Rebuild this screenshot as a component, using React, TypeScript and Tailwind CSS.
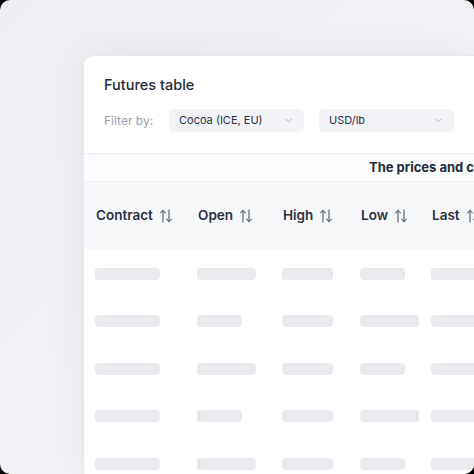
import React from "react";
import { ChevronDown } from "lucide-react";

// skeleton bar widths per row, one per column
const rows: number[][] = [
  [65, 59, 51, 45, 60],
  [65, 45, 51, 59, 60],
  [65, 59, 51, 45, 60],
  [65, 45, 51, 59, 60],
  [65, 59, 51, 45, 60],
];

const columns = ["Contract", "Open", "High", "Low", "Last"];

const SortIcon = () => (
  <svg viewBox="0 0 14 14" className="h-[14px] w-[14px] text-[#6b7280]" fill="none" stroke="currentColor" strokeWidth={1.3} strokeLinecap="round" strokeLinejoin="round">
    <path d="M4 1.5v11.5" />
    <path d="M1.6 3.9 4 1.5l2.4 2.4" />
    <path d="M10 1v11.5" />
    <path d="M7.6 10.1 10 12.5l2.4-2.4" />
  </svg>
);

const Select = ({ label }: { label: string }) => (
  <div className="flex h-[23px] w-[135px] items-center justify-between rounded-[5px] bg-[#f1f3f7] pl-[10px] pr-[10px]">
    <span className="text-[11px] text-[#2d3240]">{label}</span>
    <ChevronDown className="h-[11px] w-[11px] text-[#9aa1ae]" strokeWidth={1.75} />
  </div>
);

const App = () => {
  return (
    <div className="h-[474px] w-[474px] bg-black" style={{ fontFamily: "Inter, 'Noto Sans', sans-serif" }}>
      <div className="h-full w-full overflow-hidden rounded-[10px] bg-gradient-to-br from-[#eceef2] to-[#f4f5f8] pl-[83px] pt-[55px]">
        <div className="h-full overflow-hidden rounded-tl-[10px] border-l border-t border-[#e4e7ec] bg-white shadow-[0_0_40px_rgba(30,40,70,0.06)]">
          <div className="border-b border-[#e8eaee] px-5 pb-[21px] pt-[18px]">
            <div className="text-[14.5px] font-medium leading-[22px] text-[#272b37]">Futures table</div>
            <div className="mt-[13px] flex items-center">
              <span className="w-[65px] text-[12px] text-[#9aa0ab]">Filter by:</span>
              <Select label="Cocoa (ICE, EU)" />
              <div className="w-[15px]" />
              <Select label="USD/lb" />
            </div>
          </div>

          <div className="flex h-[28px] items-center border-b border-[#eceef1] bg-[#fafbfc] pl-[285px]">
            <span className="whitespace-nowrap text-[13px] font-bold text-[#272b37]">
              The prices and contract specifications
            </span>
          </div>

          <div className="grid h-[67px] grid-cols-[102px_85px_78px_71px_120px] items-center bg-[#f7f8fa] pl-[11px]">
            {columns.map((c) => (
              <div key={c} className="flex items-center gap-[6px] whitespace-nowrap pl-[1px] text-[13.5px] font-semibold text-[#2b3040]">
                {c}
                <SortIcon />
              </div>
            ))}
          </div>

          <div className="pt-[1px]">
            {rows.map((r, i) => (
              <div key={i} className="grid h-[47.5px] grid-cols-[102px_85px_78px_71px_120px] items-center pl-[11px]">
                {r.map((w, j) => (
                  <div key={j} className="h-[12px] rounded-[4px] bg-[#e8eaee]" style={{ width: w }} />
                ))}
              </div>
            ))}
          </div>
        </div>
      </div>
    </div>
  );
};

export default App;
